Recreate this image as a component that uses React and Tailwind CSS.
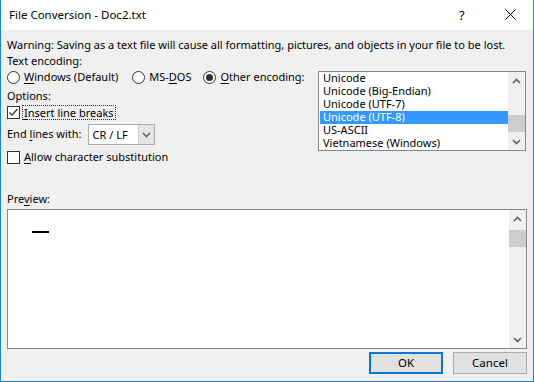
import React from "react";

const font = { fontFamily: '"Noto Sans", "Liberation Sans", sans-serif' };

function U({ children }) {
  return <span className="underline underline-offset-2 decoration-1">{children}</span>;
}

function Radio({ checked }) {
  return (
    <span className="w-[13px] h-[13px] rounded-full border border-[#333] bg-white flex items-center justify-center shrink-0">
      {checked && <span className="w-[7px] h-[7px] rounded-full bg-[#333]" />}
    </span>
  );
}

function Check({ checked }) {
  return (
    <span className="w-[13px] h-[13px] border border-[#333] bg-white flex items-center justify-center shrink-0">
      {checked && (
        <svg width="11" height="11" viewBox="0 0 11 11">
          <polyline points="1.5,5.5 4,8 9.5,2" fill="none" stroke="#333" strokeWidth="1.3" />
        </svg>
      )}
    </span>
  );
}

function Chevron({ up }) {
  return (
    <svg width="9" height="6" viewBox="0 0 9 6">
      <polyline
        points={up ? "1,5 4.5,1.5 8,5" : "1,1 4.5,4.5 8,1"}
        fill="none"
        stroke="#606060"
        strokeWidth="1.6"
      />
    </svg>
  );
}

function Scrollbar({ thumbTop, thumbH }) {
  return (
    <div className="w-[17px] h-full bg-[#f0f0f0] flex flex-col items-center">
      <div className="h-[17px] w-full flex items-center justify-center shrink-0">
        <Chevron up />
      </div>
      <div className="flex-1 w-full">
        <div className="w-full bg-[#cdcdcd]" style={{ marginTop: thumbTop, height: thumbH }} />
      </div>
      <div className="h-[17px] w-full flex items-center justify-center shrink-0">
        <Chevron />
      </div>
    </div>
  );
}

const encodings = [
  "Unicode",
  "Unicode (Big-Endian)",
  "Unicode (UTF-7)",
  "Unicode (UTF-8)",
  "US-ASCII",
  "Vietnamese (Windows)",
];

export default function App() {
  return (
    <div
      className="w-[534px] h-[382px] flex flex-col border-x border-b border-[#1883d7] bg-[#f0f0f0] text-[11px] text-black overflow-hidden"
      style={font}
    >
      {/* Title bar */}
      <div className="h-[30px] bg-white flex items-center shrink-0 relative text-[11.5px]">
        <span className="ml-[8px]">File Conversion - Doc2.txt</span>
        <span className="absolute left-[458px] top-[6px] text-[13px]">?</span>
        <svg className="absolute left-[504px] top-[9px]" width="11" height="11" viewBox="0 0 11 11">
          <path d="M0.5 0.5 L10.5 10.5 M10.5 0.5 L0.5 10.5" stroke="#000" strokeWidth="1" />
        </svg>
      </div>

      <div className="flex-1 flex flex-col px-[6px]">
        <div className="h-[16px] mt-[7px] leading-[16px] whitespace-nowrap">
          Warning: Saving as a text file will cause all formatting, pictures, and objects in your file to be lost.
        </div>

        <div className="flex">
          <div className="w-[311px] flex flex-col">
            <div className="h-[16px] leading-[16px]">Text encoding:</div>
            <div className="flex items-center h-[14px] mt-[1px] whitespace-nowrap">
              <Radio />
              <span className="ml-[4px]"><U>W</U>indows (Default)</span>
              <span className="ml-[14px]"><Radio /></span>
              <span className="ml-[4px]">MS-<U>D</U>OS</span>
              <span className="ml-[12px]"><Radio checked /></span>
              <span className="ml-[4px]"><U>O</U>ther encoding:</span>
            </div>
            <div className="h-[16px] leading-[16px] mt-[4px]">Options:</div>
            <div className="flex items-center h-[15px] mt-[1px]">
              <Check checked />
              <span className="ml-[2px] px-[1px] leading-[13px] border border-dotted border-[#333]">
                <U>I</U>nsert line breaks
              </span>
            </div>
            <div className="flex items-center h-[21px] mt-[4px]">
              <span>End <U>l</U>ines with:</span>
              <div className="ml-[6px] w-[67px] h-[21px] border border-[#adadad] bg-white flex">
                <span className="flex-1 pl-[4px] leading-[19px]">CR / LF</span>
                <div className="w-[16px] bg-[#e5e5e5] border-l border-[#cfcfcf] flex items-center justify-center">
                  <Chevron />
                </div>
              </div>
            </div>
            <div className="flex items-center h-[13px] mt-[6px]">
              <Check />
              <span className="ml-[4px]"><U>A</U>llow character substitution</span>
            </div>
          </div>

          <div className="mt-[18px] w-[208px] h-[80px] border border-[#828790] bg-white flex">
            <div className="flex-1 pl-[1px]">
              {encodings.map((e, i) => (
                <div
                  key={e}
                  className={
                    "h-[13px] leading-[12px] pl-[3px] whitespace-nowrap " +
                    (i === 3 ? "bg-[#3399ff] text-white" : "")
                  }
                >
                  {e}
                </div>
              ))}
            </div>
            <Scrollbar thumbTop={26} thumbH={17} />
          </div>
        </div>

        <div className="h-[16px] leading-[16px] mt-[27px]">
          Pre<U>v</U>iew:
        </div>
        <div className="mt-[2px] w-[520px] h-[140px] border border-[#828790] bg-white flex">
          <div className="flex-1 relative">
            <div className="absolute left-[24px] top-[21px] w-[17px] h-[2px] bg-black" />
          </div>
          <Scrollbar thumbTop={3} thumbH={17} />
        </div>

        <div className="flex justify-end gap-[10px] mt-[3px]">
          <button className="w-[74px] h-[22px] border-2 border-[#0078d7] bg-[#e1e1e1] text-[11.5px]">OK</button>
          <button className="w-[74px] h-[22px] border border-[#adadad] bg-[#e1e1e1] text-[11.5px]">Cancel</button>
        </div>
      </div>
    </div>
  );
}
